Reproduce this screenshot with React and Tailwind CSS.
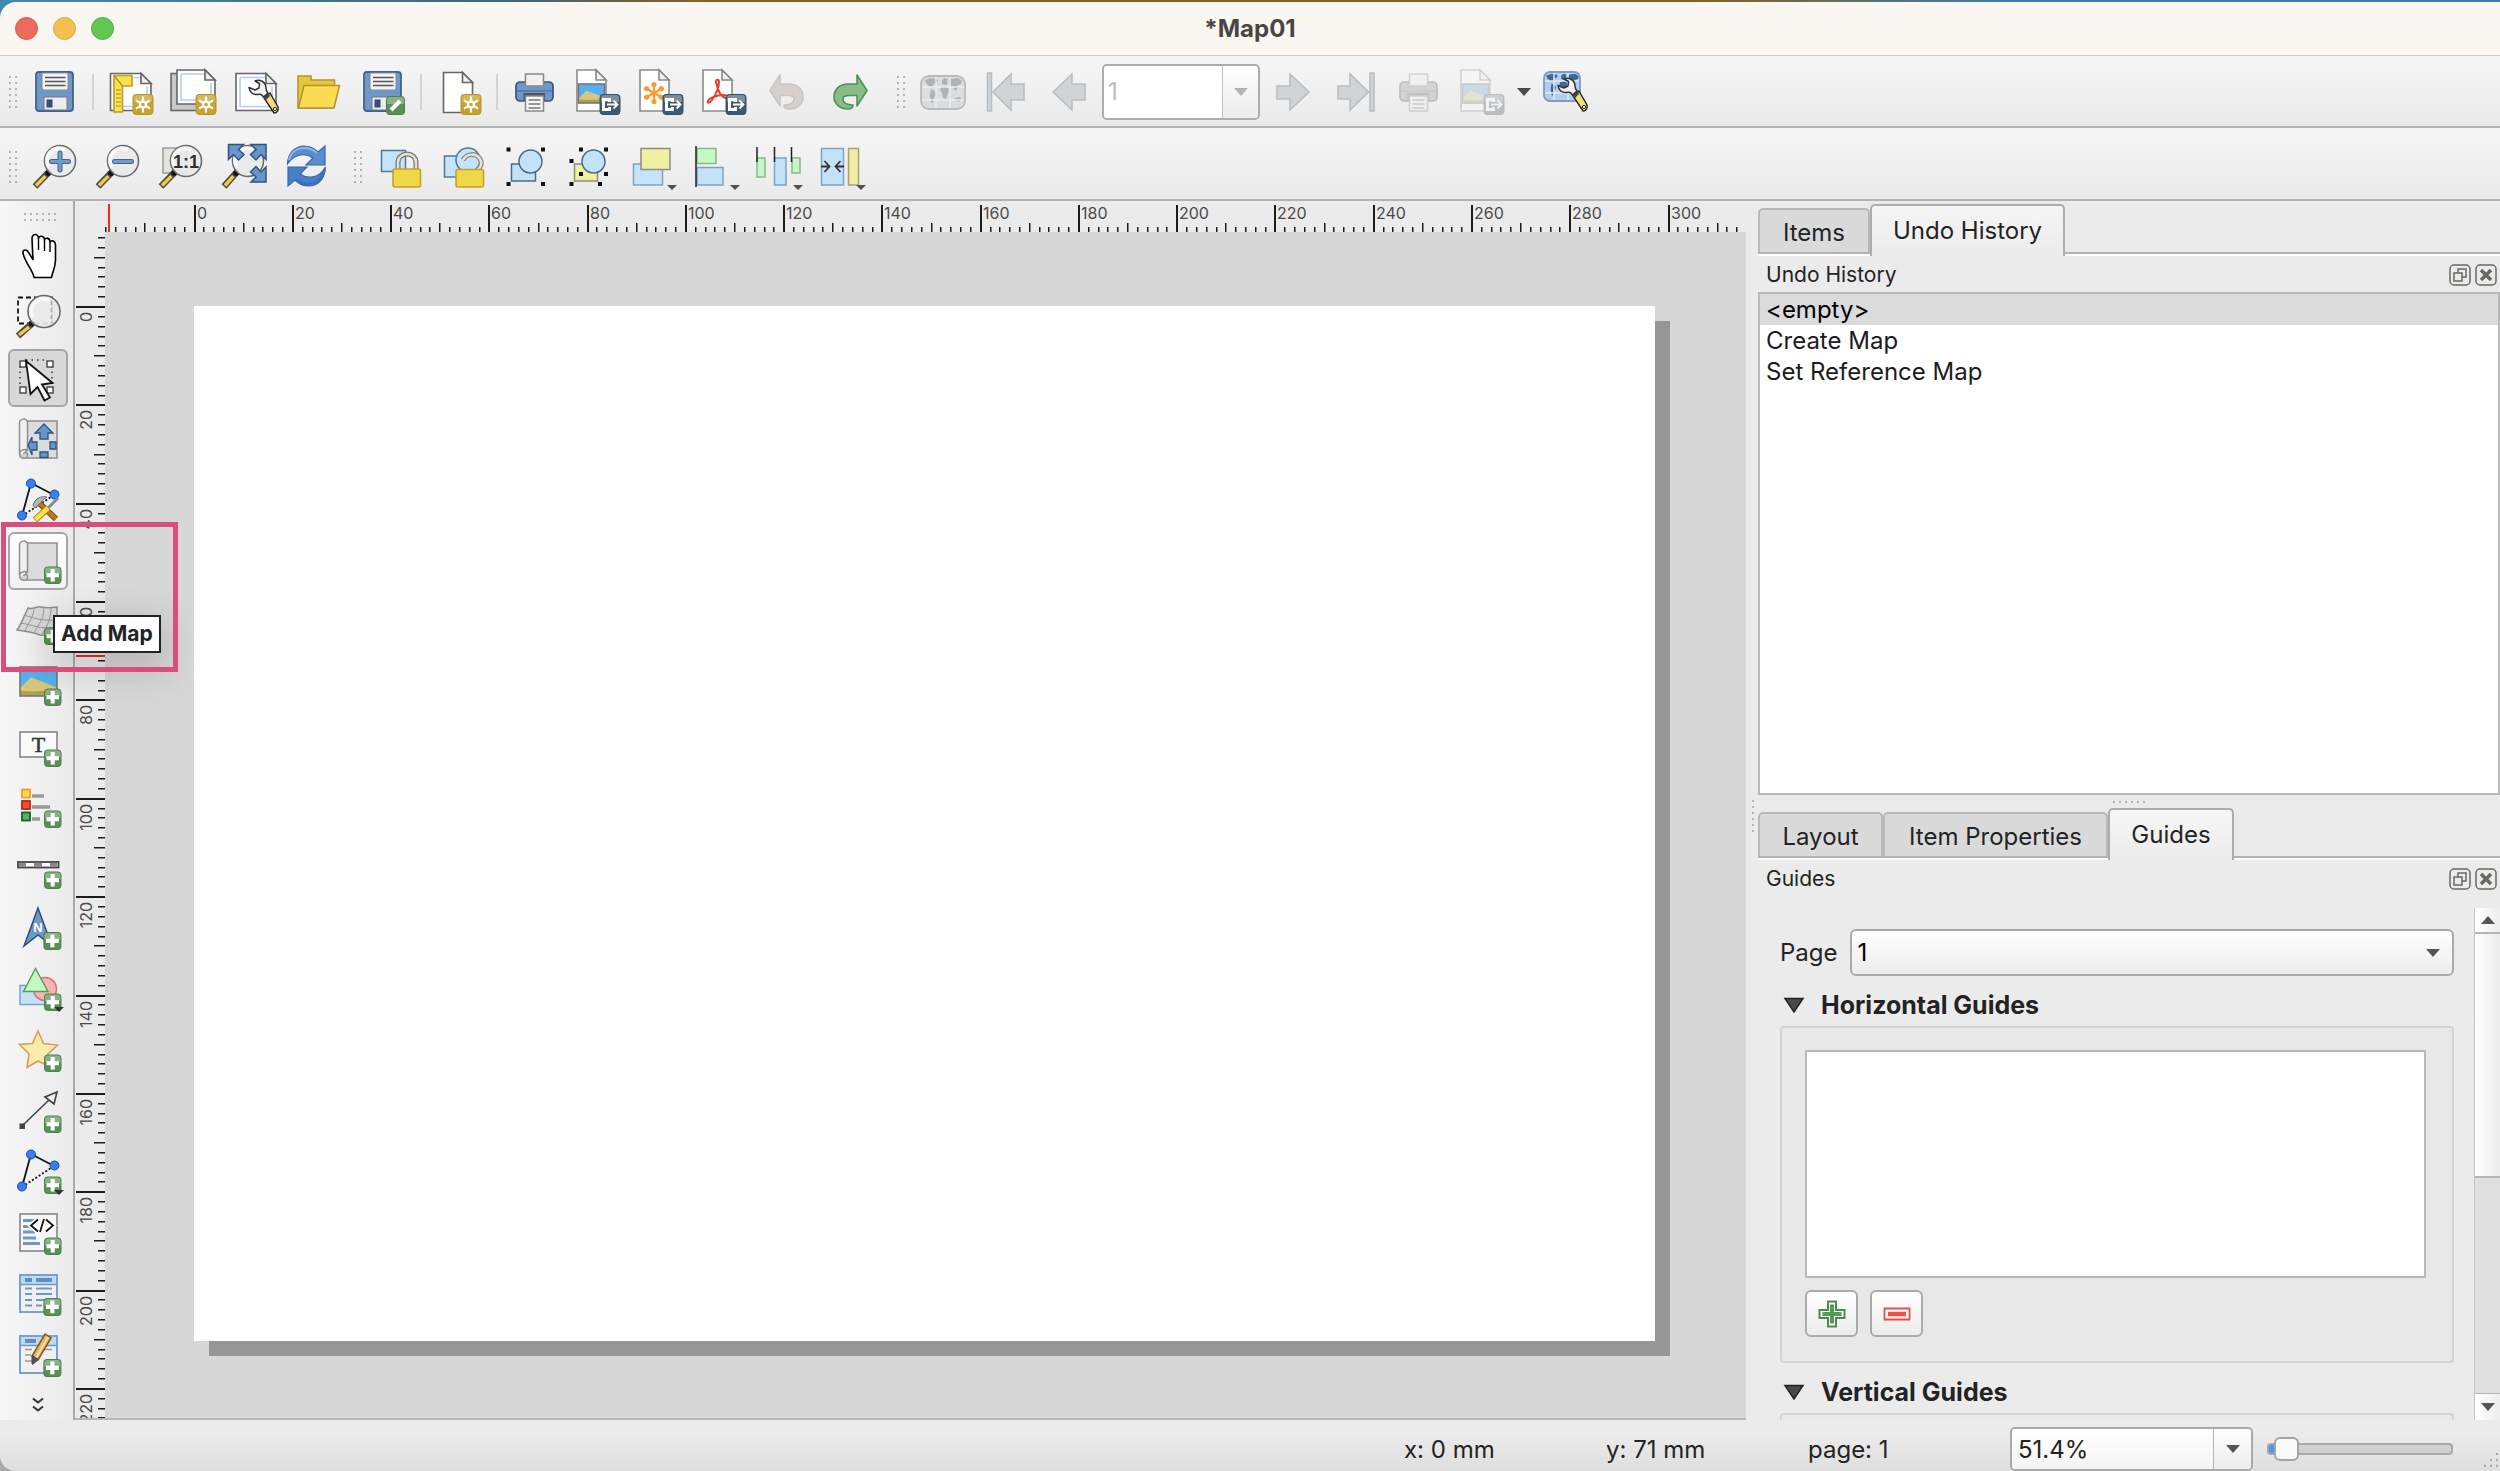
import React from "react";

/* ---------- shared icon parts ---------- */

function Icon({ children, className = "" }) {
  return (
    <svg viewBox="0 0 48 48" className={"block h-12 w-12 shrink-0 overflow-visible " + className} fill="none" aria-hidden="true">
      {children}
    </svg>
  );
}

function GoldBadge() {
  return (
    <g>
      <rect x="26" y="26.5" width="20" height="20" rx="3" fill="#c9a22e" stroke="#b8952b" />
      <path d="M27 33V30a3 3 0 0 1 3-3h12a3 3 0 0 1 3 3v3z" fill="#d4b95c" />
      <path d="M36 28.500v16M29 32.500l14 8M43 32.500l-14 8" stroke="#fff" strokeWidth="2.200" />
      <circle cx="36" cy="36.500" r="4" fill="#fff" />
      <circle cx="36" cy="36.500" r="1.800" fill="#c9a22e" />
    </g>
  );
}

function ExportBadge() {
  return (
    <g>
      <rect x="26" y="26.500" width="20" height="20" rx="3" fill="#3e5a70" stroke="#34506a" />
      <path d="M27 34v-4a3 3 0 0 1 3-3h12a3 3 0 0 1 3 3v4z" fill="#7d8f9d" />
      <path d="M35.500 34v-2.500h-6v10h6V39" stroke="#fff" strokeWidth="3" />
      <path d="M33 36.500h10M39.500 32.500l4 4-4 4" stroke="#fff" strokeWidth="1.800" />
    </g>
  );
}

function PlusBadge({ big = false }) {
  return (
    <g transform={big ? "translate(-1.500 -1.500) scale(1.030)" : undefined}>
      <rect x="30.500" y="30" width="16.500" height="16.500" rx="3" fill="#5a9058" stroke="#4b8249" />
      <path d="M31 37v-3.500a3 3 0 0 1 3-3h9.500a3 3 0 0 1 3 3V37z" fill="#8bb089" />
      <path d="M38.700 32v12.500M32.500 38.200H45" stroke="#fff" strokeWidth="4" />
    </g>
  );
}

function Drop({ x = 39, y = 42, color = "#505050" }) {
  return <path d={`M${x} ${y}h10l-5 5z`} fill={color} />;
}

function Sheet({ x, y, w, h, fold = 10, fill = "#fff", stroke = "#666", inner = false }) {
  return (
    <g>
      <path d={`M${x} ${y}h${w - fold}l${fold} ${fold}v${h - fold}h${-w}z`} fill={fill} stroke={stroke} strokeWidth="1.600" />
      {inner && <path d={`M${x + 4} ${y + 4}h${w - fold - 4}v${fold - 4}M${x + w - 4} ${y + fold + 3}V${y + h - 4}H${x + 4}V${y + 4}`} stroke="#b7cdf7" strokeWidth="1.600" />}
      <path d={`M${x + w - fold} ${y}v${fold}h${fold}z`} fill="#f0f0f0" stroke={stroke} strokeWidth="1.600" />
    </g>
  );
}

function Wrench({ dx = 0, dy = 0 }) {
  return (
    <g transform={`translate(${dx} ${dy})`}>
      <path d="M30 30l6-5 8 14c1 3-1 6-4 6z" fill="#f0dc7c" stroke="#222" strokeWidth="1.400" />
      <path d="M28.500 28.500l5.500-4 2 3.500-4 4z" fill="#444" />
      <circle cx="41" cy="41" r="1.600" fill="#fff" stroke="#222" />
      <path d="M21 13c5-2 11 1 11 7 0 2 0 3 2 5l-4.500 4c-2-3-3-3-6-2.500-5 .5-8-3-8.500-7l6 2.500 4-2 .5-4.500z" fill="#f2f2f2" stroke="#333" strokeWidth="1.500" strokeLinejoin="round" />
    </g>
  );
}

function Floppy() {
  return (
    <g>
      <rect x="5" y="4" width="37" height="39" rx="3" fill="#6f97c9" stroke="#41648f" strokeWidth="1.800" />
      <path d="M11 5h26v15a2 2 0 0 1-2 2H13a2 2 0 0 1-2-2z" fill="#f3f3f3" stroke="#8b8b8b" />
      <path d="M14 9.500h20.500M14 13.500h20.500M14 17.500h20.500" stroke="#555" strokeWidth="1.500" />
      <rect x="13" y="29" width="23" height="13" fill="#ececec" stroke="#777" />
      <rect x="16" y="32" width="5" height="7" fill="#34547c" stroke="#24466d" />
    </g>
  );
}

function Landscape({ x, y, w, h }) {
  return (
    <g>
      <rect x={x} y={y} width={w} height={h} fill="#55b0f0" stroke="#767676" strokeWidth="1.600" />
      <path d={`M${x + 1} ${y + h * 0.7}l${w * 0.27} ${-h * 0.35} ${w * 0.4} ${h * 0.2} ${w * 0.33 - 2} ${h * 0.15}V${y + h - 1}h${2 - w}z`} fill="#d6c77a" />
      <path d={`M${x + 1} ${y + h * 0.82}q${w / 2} ${h * 0.06} ${w - 2} ${-h * 0.04}V${y + h - 1}h${2 - w}z`} fill="#b29f44" />
    </g>
  );
}

function Lens({ cx, cy, r = 15.5, hx = 4, hy = 43.5 }) {
  const jx = cx - r * 0.75;
  const jy = cy + r * 0.75;
  return (
    <g>
      <path d={`M${jx} ${jy}L${hx} ${hy}`} stroke="#4a4a4a" strokeWidth="6.500" />
      <path d={`M${jx - 3} ${jy + 3.5}L${hx + 1} ${hy - 1}`} stroke="#f6c944" strokeWidth="3.500" />
      <circle cx={jx} cy={jy} r="3" fill="#111" />
      <circle cx={cx} cy={cy} r={r} fill="#e9e9e9" fillOpacity=".92" stroke="#6b6b6b" strokeWidth="1.600" />
      <path d={`M${cx - 11} ${cy + 6}A12 12 0 0 1 ${cx + 5} ${cy - 11}`} stroke="#f8f8f8" strokeWidth="4" />
    </g>
  );
}

/* ---------- file toolbar icons ---------- */

const SaveIcon = () => <Icon><Floppy /></Icon>;

const NewLayoutIcon = () => (
  <Icon>
    <Sheet x={3.5} y={5.500} w={40.500} h={37} inner />
    <path d="M7 7.500h18v10.500H15.500v26H7z" fill="#fbe04f" stroke="#c39a2c" strokeWidth="1.600" />
    <path d="M7 7.500l8.500 10.500M9 22h5M9 26h5M9 30h5M9 34h5M9 38h5" stroke="#b28a24" strokeWidth="1.200" />
    <GoldBadge />
  </Icon>
);

const DuplicateLayoutIcon = () => (
  <Icon>
    <rect x="1" y="5.500" width="30" height="37" fill="#c9c9c9" stroke="#666" strokeWidth="1.600" />
    <Sheet x={7} y={2} w={38} h={34} inner />
    <GoldBadge />
  </Icon>
);

const ManagerIcon = () => (
  <Icon>
    <Sheet x={3} y={5.500} w={40} h={37} inner />
    <Wrench dx={1} dy={0} />
  </Icon>
);

const FolderIcon = () => (
  <Icon>
    <path d="M2 40V8h13v4h23.500v6H38l-2 22z" fill="#e7c63f" stroke="#b5952f" strokeWidth="1.600" />
    <path d="M8 17.500h35.500L38 40H2.500z" fill="#fddb52" stroke="#b5952f" strokeWidth="1.600" strokeLinejoin="round" />
  </Icon>
);

const SaveAsIcon = () => (
  <Icon>
    <Floppy />
    <rect x="27.500" y="28.500" width="18" height="18" rx="3" fill="#5a9058" stroke="#4b8249" />
    <path d="M28 36v-4a3 3 0 0 1 3-3h11a3 3 0 0 1 3 3v4z" fill="#8bb089" />
    <path d="M32 42l9-9" stroke="#fff" strokeWidth="4" />
  </Icon>
);

const NewPageIcon = () => (
  <Icon>
    <Sheet x={8.500} y={4.500} w={29} h={40} />
    <GoldBadge />
  </Icon>
);

const PrinterArt = () => (
  <g>
    <rect x="5" y="14" width="37" height="19" rx="4" fill="#6e98c9" stroke="#33557f" strokeWidth="1.700" />
    <path d="M6 23h35" stroke="#5880b2" strokeWidth="2" />
    <rect x="14.500" y="6" width="18" height="12" fill="#f0f0f0" stroke="#888" strokeWidth="1.500" />
    <rect x="12.500" y="25" width="21.500" height="8" fill="#555" />
    <rect x="14.500" y="28" width="18" height="15" fill="#f6f6f6" stroke="#888" strokeWidth="1.500" />
    <path d="M17.500 32h12M17.500 36h12M17.500 40h12" stroke="#777" strokeWidth="1.500" />
  </g>
);
const PrinterIcon = () => <Icon><PrinterArt /></Icon>;
const PrinterOffIcon = () => <Icon className="opacity-30 grayscale"><PrinterArt /></Icon>;

const ExportImageArt = () => (
  <g>
    <Sheet x={3} y={2} w={29} h={41} stroke="#8a8a8a" />
    <Landscape x={4.5} y={16} w={26} h={19} />
    <ExportBadge />
  </g>
);
const ExportImageIcon = () => <Icon><ExportImageArt /></Icon>;
const ExportImageOffIcon = () => <Icon className="opacity-30 saturate-50"><ExportImageArt /></Icon>;

const ExportSvgIcon = () => (
  <Icon>
    <Sheet x={3} y={2} w={29} h={41} stroke="#8a8a8a" />
    {[0, 60, 120, 180, 240, 300].map((a) => (
      <g key={a} transform={`rotate(${a} 17 25)`}>
        <path d="M17 25V17" stroke="#f99b34" strokeWidth="2.200" />
        <circle cx="17" cy="16.500" r="2.600" fill="#f99b34" />
      </g>
    ))}
    <ExportBadge />
  </Icon>
);

const ExportPdfIcon = () => (
  <Icon>
    <Sheet x={3} y={2} w={29} h={41} stroke="#8a8a8a" />
    <path d="M16 14c0-3 3-3 3 0 0 5-3 12-7 18-3 4-5 3-4 1 1-3 9-6 15-6 5 0 6 3 3 3-4 0-8-6-10-16z" stroke="#e8402c" strokeWidth="2" />
    <ExportBadge />
  </Icon>
);

const HookArrow = ({ fill, stroke }) => (
  <path d="M7 22.500L17 7v9h9c9 0 14 6 14 13 0 7-6 12-14 12-4 0-5-1-5-4 7 0 10-3 10-6s-3-3.500-6-3.500H17V38z" fill={fill} stroke={stroke} strokeWidth="1.600" strokeLinejoin="round" />
);
const UndoIcon = () => <Icon><HookArrow fill="#d6d0cd" stroke="#cbc5c2" /></Icon>;
const RedoIcon = () => <Icon className="-scale-x-100"><HookArrow fill="#8abb88" stroke="#4a9355" /></Icon>;

/* ---------- atlas toolbar icons ---------- */

const Continents = ({ color }) => (
  <path
    d="M6 12l6-2 6 1 1 2-4 3-2 3-3-1-3-3zM12 21l4 2 1 3-2 4-1 5-2-1-1-7zM23 12l3-2 3 1-1 3 1 2-3 1-3-1zM22 19l5-1 3 3-1 4-2 6-3-1-1-5-2-3zM31 11l8-1 4 3-1 3-3 1-1 4-2 2-2-4-4-3zM36 30l5-1 1 2-2 3-4-2z"
    fill={color}
  />
);

const AtlasIcon = () => (
  <Icon>
    <rect x="2" y="8" width="44" height="33" rx="8" fill="#dadcde" stroke="#b9bcbe" strokeWidth="1.800" />
    <Continents color="#b0b3b5" />
    <path d="M17 9v31M31 9v31M3 19h42M3 32h42" stroke="#ececec" strokeWidth="1.400" />
  </Icon>
);
const AtlasSettingsIcon = () => (
  <Icon>
    <rect x="3" y="4" width="36" height="29" rx="6" fill="#b3cdec" stroke="#7b9cc4" strokeWidth="1.800" />
    <g transform="translate(0 -3) scale(.88)"><Continents color="#3f6797" /></g>
    <path d="M13 5v27M27 5v27M4 13h34M4 25h34" stroke="#e0ecf9" strokeWidth="1.500" />
    <Wrench dx={2} dy={-2} />
  </Icon>
);
const FirstIcon = () => (
  <Icon><g fill="#d0d4d7" stroke="#b9bec2" strokeWidth="1.600"><path d="M5.500 5h4v38h-4zM11 24L29 6v10h13v16H29v10z" /></g></Icon>
);
const PrevIcon = () => (
  <Icon><path d="M8 24L27 6v10h13v16H27v10z" fill="#d0d4d7" stroke="#b9bec2" strokeWidth="1.600" /></Icon>
);
const NextIcon = () => (
  <Icon><path d="M40 24L21 6v12H8v13h13v11z" fill="#d0d4d7" stroke="#b9bec2" strokeWidth="1.600" /></Icon>
);
const LastIcon = () => (
  <Icon><g fill="#d0d4d7" stroke="#b9bec2" strokeWidth="1.600"><path d="M38 5h4v38h-4zM36.500 24L18 6v12H6v13h12v11z" /></g></Icon>
);

/* ---------- view and arrange toolbar icons ---------- */

const ZoomInIcon = () => (
  <Icon><Lens cx={29} cy={18} /><path d="M29 10v17M20.500 18.500h17" stroke="#41648f" strokeWidth="5" strokeLinecap="round" /><path d="M29 10v17M20.500 18.500h17" stroke="#6f9bcf" strokeWidth="3" strokeLinecap="round" /></Icon>
);
const ZoomOutIcon = () => (
  <Icon><Lens cx={29} cy={18} /><path d="M20.500 18.500h17" stroke="#41648f" strokeWidth="5" strokeLinecap="round" /><path d="M20.500 18.500h17" stroke="#6f9bcf" strokeWidth="3" strokeLinecap="round" /></Icon>
);
const ZoomActualIcon = () => (
  <Icon>
    <rect x="6" y="5" width="24" height="25" fill="#e2e4de" stroke="#9a9a9a" strokeWidth="1.500" />
    <Lens cx={29} cy={18} />
    <text x="29" y="25" textAnchor="middle" fontSize="18" fontWeight="700" fontFamily="Liberation Sans, sans-serif" fill="#2b3032">1:1</text>
  </Icon>
);
const CornerArrow = ({ t }) => (
  <path transform={t} d="M0 0h15l-5 5 5.500 5L10 15.500l-5-5.500-5 5z" fill="#6795ca" stroke="#2f5480" strokeWidth="1.500" />
);
const ZoomFullIcon = () => (
  <Icon>
    <Lens cx={28} cy={18} />
    <CornerArrow t="translate(8.500 1.500)" />
    <CornerArrow t="translate(46 1.500) scale(-1 1)" />
    <CornerArrow t="translate(46 39) scale(-1 -1)" />
  </Icon>
);
const RefreshIcon = () => (
  <Icon>
    <path d="M4.500 21C5 9 13 3 21 3c7 0 11 3 14 6l7-6v19H23l7-7c-7-5-18-5-25.500 6z" fill="#5a8dd0" stroke="#3567ad" strokeWidth="1.200" />
    <path d="M6 17C8 8 15 5 21 5c6 0 10 2 13 5" stroke="#8fb5e4" strokeWidth="2" />
    <path d="M42.500 24C42 37 34 43 26 43c-7 0-11-3-14-6l-7 6V24h19l-7 7c7 5 19 5 25.500-7z" fill="#4a7fc8" stroke="#3567ad" strokeWidth="1.200" />
    <path d="M40 30c-3 8-9 11-14 11-6 0-10-2-13-5" stroke="#3a6fb8" strokeWidth="2" />
  </Icon>
);
const LockIcon = () => (
  <Icon>
    <rect x="5.500" y="7.500" width="24" height="21" fill="#c3e4fa" stroke="#53788f" strokeWidth="1.500" />
    <path d="M22 27v-8a9 8 0 0 1 18 0v8" stroke="#777870" strokeWidth="5" />
    <path d="M22 27v-8a9 8 0 0 1 18 0v8" stroke="#e4e4dc" strokeWidth="2.500" />
    <rect x="17" y="26" width="27.500" height="18" rx="2" fill="#efd847" stroke="#c6a125" strokeWidth="1.600" />
  </Icon>
);
const UnlockIcon = () => (
  <Icon>
    <rect x="5.500" y="13" width="22" height="21" fill="#c3e4fa" stroke="#53788f" strokeWidth="1.500" />
    <circle cx="29" cy="17" r="12" fill="#c3e4fa" stroke="#53788f" strokeWidth="1.500" />
    <path d="M24 17c4-7 13-7 17-1 3 5 0 9-3 11" stroke="#8b8b86" strokeWidth="5" />
    <path d="M24 17c4-7 13-7 17-1 3 5 0 9-3 11" stroke="#e4e4dc" strokeWidth="2.500" />
    <rect x="17" y="26.500" width="27.500" height="17.500" rx="2" fill="#efd847" stroke="#c6a125" strokeWidth="1.600" />
  </Icon>
);
const Dots = ({ pts }) => pts.map(([x, y]) => <rect key={x + "-" + y} x={x - 2} y={y - 2} width="4" height="4" fill="#111" />);
const GroupIcon = () => (
  <Icon>
    <rect x="9.500" y="21" width="24" height="17" fill="#c3e2f8" stroke="#466d88" strokeWidth="1.500" />
    <circle cx="28.500" cy="18.500" r="11.500" fill="#c3e2f8" stroke="#466d88" strokeWidth="1.500" />
    <Dots pts={[[6.500, 6.500], [41, 6.500], [6.500, 41], [41, 41]]} />
  </Icon>
);
const UngroupIcon = () => (
  <Icon>
    <rect x="9.500" y="21" width="23" height="17" fill="#f1efa2" stroke="#8d8d7a" strokeWidth="1.500" />
    <circle cx="28.500" cy="18.500" r="11.500" fill="#c3e2f8" stroke="#466d88" strokeWidth="1.500" />
    <Dots pts={[[16, 6.500], [41, 6.500], [6.500, 18], [16, 31], [41, 31], [6.500, 41], [35, 41]]} />
  </Icon>
);
const RaiseIcon = () => (
  <Icon>
    <rect x="5.500" y="21" width="29" height="21" fill="#c5e4f9" stroke="#7ca4c0" strokeWidth="1.500" />
    <rect x="13" y="5.500" width="29" height="21" fill="#f1efa2" stroke="#8d8d85" strokeWidth="1.500" />
    <Drop />
  </Icon>
);
const AlignIcon = () => (
  <Icon>
    <rect x="6" y="5.500" width="19" height="15" fill="#c4f8c4" stroke="#8ab68a" strokeWidth="1.500" />
    <rect x="6" y="24.500" width="26" height="17.500" fill="#c3e2f8" stroke="#7ca4c0" strokeWidth="1.500" />
    <path d="M5 3v41" stroke="#222" strokeWidth="1.500" />
    <Drop />
  </Icon>
);
const DistributeIcon = () => (
  <Icon>
    <rect x="3" y="15" width="8" height="19" fill="#c4f8c4" stroke="#8ab68a" strokeWidth="1.500" />
    <rect x="20.500" y="15" width="11.500" height="27" fill="#c3e2f8" stroke="#7ca4c0" strokeWidth="1.500" />
    <rect x="38" y="15" width="8" height="15" fill="#c4f8c4" stroke="#8ab68a" strokeWidth="1.500" />
    <path d="M3 4v15M20.500 4v15M37.500 4v15" stroke="#222" strokeWidth="1.500" />
    <Drop />
  </Icon>
);
const ResizeIcon = () => (
  <Icon>
    <rect x="4.500" y="5.500" width="22" height="36.500" fill="#c3e2f8" stroke="#7ca4c0" strokeWidth="1.500" />
    <rect x="31.500" y="5.500" width="10" height="36.500" fill="#f1efa2" stroke="#a3a37a" strokeWidth="1.500" />
    <path d="M4 23.500h8M7.500 18l5 5.500-5 5.500M27 23.500h-8M23.500 18l-5 5.500 5 5.500" stroke="#333" strokeWidth="1.800" />
    <Drop />
  </Icon>
);

/* ---------- toolbox icons ---------- */

const HandIcon = () => (
  <Icon>
    <path
      d="M20 45.500C19 38 11 31 9 21c-.500-4 4-4 5.500-.500l4.500 7L18 7c0-6 6-6 6.500-.500.500-3.500 6-3 6 1.500 1-3 5.500-2 5.500 2 1.500-2.500 5.500-1 5.500 3V28c0 7-2.500 10-4 17.500z"
      fill="#fff" stroke="#000" strokeWidth="1.600" strokeLinejoin="round"
    />
    <path d="M24.500 6.500V18M30.500 8v11M36 10v10" stroke="#000" strokeWidth="1.400" />
  </Icon>
);
const ZoomToolIcon = () => (
  <Icon>
    <rect x="4" y="4.500" width="34" height="26" stroke="#111" strokeWidth="1.800" strokeDasharray="5 3" />
    <Lens cx={30} cy={18.500} r={16} hx={4} hy={43} />
    <path d="M37.500 8v22" stroke="#aaa" strokeWidth="1.600" strokeDasharray="4 3" />
  </Icon>
);
const SelectIcon = () => (
  <Icon>
    <path d="M12 6h20M6 12v22M38 12v22" stroke="#333" strokeWidth="1.500" strokeDasharray="1.500 4" />
    <g fill="#fff" stroke="#444" strokeWidth="1.400">
      <rect x="6" y="7" width="6" height="6" /><rect x="33" y="7" width="6" height="6" />
      <rect x="6" y="33" width="6" height="6" /><rect x="33" y="33" width="6" height="6" />
    </g>
    <path d="M12 7l4.500 33 7-7 7 13.500 5.500-3-8-13 10.500-1.500z" fill="#fff" stroke="#111" strokeWidth="1.800" />
  </Icon>
);
const ScrollArt = () => (
  <g>
    <path d="M12 6h31v37H12z" fill="#dcdcdc" stroke="#8f8f8f" strokeWidth="1.600" />
    <path d="M5.500 8c0-5 8-5 8-1v28c-3-1-8 0-8 4z" fill="#f0f0f0" stroke="#8f8f8f" strokeWidth="1.500" />
    <path d="M5.500 38.500c0 6 8 6 8 2v-2c-1-1.500-4-1.500-4 .500" fill="#d2d2d2" stroke="#8f8f8f" strokeWidth="1.400" />
  </g>
);
const MoveContentIcon = () => (
  <Icon>
    <ScrollArt />
    <g fill="#6795ca" stroke="#2f5480" strokeWidth="1.300">
      <path d="M30 9l9 9h-5v6h-8v-6h-5z" /><path d="M14 30l4-8v5h5v8h-5v5z" />
      <path d="M42 27v7h-6v-7z" /><path d="M26 37h8v5.500h-8z" />
    </g>
  </Icon>
);
const NodeArt = () => (
  <g>
    <path d="M8 40l9-33 23 12" stroke="#111" strokeWidth="1.800" />
    <path d="M8 40l32-21" stroke="#111" strokeWidth="1.800" strokeDasharray="2 2" />
    <g fill="#3480fa" stroke="#1b4d9c"><circle cx="17" cy="7.500" r="4.500" /><circle cx="40.500" cy="18.500" r="4.500" /><circle cx="8" cy="39.500" r="4.500" /></g>
  </g>
);
const EditNodesIcon = () => (
  <Icon>
    <NodeArt />
    <path d="M22 24l20 19" stroke="#7a4a12" strokeWidth="6" /><path d="M22 24l20 19" stroke="#b9781f" strokeWidth="4" />
    <path d="M19 29c3-8 9-9 14-8-4 2-7 7-12 11z" fill="#b5b8b2" stroke="#777" />
    <path d="M44 22L32 34" stroke="#888" strokeWidth="3" />
    <path d="M34 32L21 44" stroke="#a98a12" strokeWidth="6.500" /><path d="M34 32L21.500 43.500" stroke="#fce04a" strokeWidth="4.500" />
  </Icon>
);
const AddMapIcon = () => <Icon><ScrollArt /><PlusBadge /></Icon>;
const Add3dIcon = () => (
  <Icon>
    <path d="M14 10c5 2 8-2 13-1s10 1 16 0v24c-8-1-10 6-17 4-8-3-14-4-23-5 4-5 7-14 11-22z" fill="#d9d9d9" stroke="#8f8f8f" strokeWidth="1.500" />
    <path d="M10 17c10 3 16 6 33 5M7 25c12 2 20 7 36 4M20 10c0 9-6 15-9 23M29 9c3 9-5 18-9 26M37 10c0 8-3 18-9 26" stroke="#9b9b9b" />
    <PlusBadge />
  </Icon>
);
const AddPictureIcon = () => <Icon><Landscape x={6} y={8} w={37} h={29} /><PlusBadge /></Icon>;
const AddLabelIcon = () => (
  <Icon>
    <rect x="6" y="12" width="37" height="25" fill="#fafafa" stroke="#929292" strokeWidth="1.800" />
    <text x="24.500" y="32" textAnchor="middle" fontSize="22" fontFamily="Liberation Serif, serif" fill="#333" stroke="#333" strokeWidth=".5">T</text>
    <PlusBadge />
  </Icon>
);
const AddLegendIcon = () => (
  <Icon>
    <rect x="8" y="8.500" width="8" height="8" fill="#fddf4c" stroke="#f09b39" strokeWidth="1.800" />
    <rect x="8" y="20" width="8" height="8" fill="#fb4a30" stroke="#b62a1c" strokeWidth="1.800" />
    <rect x="8" y="31.500" width="8" height="8" fill="#4fb95a" stroke="#1e5a34" strokeWidth="1.800" />
    <path d="M18 15h12M18 26h18M18 38h8" stroke="#999" strokeWidth="3.500" />
    <PlusBadge />
  </Icon>
);
const AddScaleBarIcon = () => (
  <Icon>
    <rect x="4" y="20" width="40.500" height="5.500" fill="#fff" stroke="#444" strokeWidth="1.800" />
    <path d="M5 22.800h7M20 22.800h8M36 22.800h7" stroke="#888" strokeWidth="4" />
    <PlusBadge />
  </Icon>
);
const AddNorthIcon = () => (
  <Icon>
    <path d="M24 5l14 38-14-11-14 11z" fill="#6e98c9" stroke="#2f5076" strokeWidth="1.500" />
    <text x="24" y="29" textAnchor="middle" fontSize="13" fontWeight="700" fontFamily="Liberation Sans, sans-serif" fill="#fff">N</text>
    <PlusBadge big />
  </Icon>
);
const AddShapeIcon = () => (
  <Icon>
    <rect x="6" y="21.500" width="26" height="19" fill="#c3e2f8" stroke="#7ca4c0" strokeWidth="1.500" />
    <circle cx="31" cy="25" r="11.500" fill="#f9b3b3" stroke="#db6f6f" strokeWidth="1.500" />
    <path d="M21.500 4.500L34 27.500H9.500z" fill="#c4f8c4" stroke="#5b9a5b" strokeWidth="1.500" />
    <PlusBadge />
    <Drop x={40} y={43} color="#333" />
  </Icon>
);
const AddStarIcon = () => (
  <Icon>
    <path d="M24 6l5.500 12.500 14 1.500-10 9.500 3 12.500L24 36l-11 6.500 2-13.500-9.500-9.500 13-1z" fill="#fcecac" stroke="#dc9b5f" strokeWidth="1.600" />
    <PlusBadge />
  </Icon>
);
const AddArrowIcon = () => (
  <Icon>
    <path d="M8 40l27-26" stroke="#444" strokeWidth="1.600" />
    <rect x="5.500" y="37.500" width="5.500" height="5.500" fill="#444" />
    <path d="M43 6l-12 5 9 7z" fill="#eee" stroke="#444" strokeWidth="1.700" />
    <PlusBadge />
  </Icon>
);
const AddNodeIcon = () => <Icon><NodeArt /><PlusBadge /><Drop x={40} y={43} color="#333" /></Icon>;
const AddHtmlIcon = () => (
  <Icon>
    <rect x="6" y="6" width="37" height="37" fill="#f7f7f7" stroke="#929292" strokeWidth="1.800" />
    <path d="M9 12.500h12M9 18.500h9M9 24h12M9 30h13M9 35.500h17" stroke="#6e98c9" strokeWidth="3" />
    <path d="M24 11.500l-7 6 7 6M32 11.500l7 6-7 6M30 11l-4 13" stroke="#fff" strokeWidth="5" />
    <path d="M24 11.500l-7 6 7 6M32 11.500l7 6-7 6M30 11l-4 13" stroke="#111" strokeWidth="1.800" />
    <PlusBadge />
  </Icon>
);
const AddTableIcon = () => (
  <Icon>
    <rect x="6" y="6" width="37" height="37" fill="#f0f0f0" stroke="#6e98c9" strokeWidth="1.800" />
    <path d="M7 7h35v8H7z" fill="#b9dcf4" /><path d="M6 15.500h37" stroke="#6e98c9" strokeWidth="1.600" />
    <path d="M11 11h7M22 11h16" stroke="#5f8cc2" strokeWidth="4" />
    <path d="M11 19.500h7M22 19.500h16M11 25h7M22 25h16M11 31h7M22 31h14M11 36.500h7M22 36.500h6" stroke="#6e98c9" strokeWidth="1.800" />
    <PlusBadge big />
  </Icon>
);
const AddFixedTableIcon = () => (
  <Icon>
    <rect x="6" y="6" width="37" height="37" fill="#f0f0f0" stroke="#6e98c9" strokeWidth="1.800" />
    <path d="M7 7h35v8H7z" fill="#b9dcf4" /><path d="M6 15.500h37" stroke="#6e98c9" strokeWidth="1.600" />
    <path d="M11 11h11" stroke="#5f8cc2" strokeWidth="4" />
    <path d="M11 19.500h7M28 19.500h10M11 25h6M11 31h8" stroke="#999" strokeWidth="1.600" />
    <path d="M31 4l6 4-13 22-6-4z" fill="#eab561" stroke="#8a5318" strokeWidth="1.500" />
    <path d="M34 7L22 28" stroke="#f8ddae" strokeWidth="2" />
    <path d="M18 25.500l6.500 4-6 5-0.500-1z" fill="#555" stroke="#444" />
    <PlusBadge big />
  </Icon>
);

/* ---------- building blocks ---------- */

function ToolButton({ label, icon: I, disabled }) {
  return (
    <button type="button" aria-label={label} disabled={disabled} className="flex h-[60px] w-[60px] shrink-0 items-center justify-center">
      <I />
    </button>
  );
}

function GripV() {
  return (
    <svg viewBox="0 0 8 32" className="block h-8 w-2 shrink-0" aria-hidden="true">
      {[0, 6, 12, 18, 24, 30].map((y) => (
        <g key={y} fill="#b4b4b4"><rect x="0" y={y} width="2" height="2" /><rect x="6" y={y} width="2" height="2" /></g>
      ))}
    </svg>
  );
}

const Separator = () => (
  <div className="flex w-2.5 shrink-0 justify-center"><div className="h-9 w-0.5 bg-[#d4d4d4]" /></div>
);

const Triangle = ({ color = "#555", up = false }) => (
  <svg viewBox="0 0 14 8" className={"block h-2 w-3.5 " + (up ? "-scale-y-100" : "")} aria-hidden="true">
    <path d="M0 0h14L7 8z" fill={color} />
  </svg>
);

function Tabs({ items, active }) {
  return (
    <div role="tablist" className="flex items-end border-b-2 border-[#b2b2b2] text-[24px] leading-7 shadow-[0_2px_0_#fff]">
      {items.map(([name, width]) =>
        name === active ? (
          <button key={name} role="tab" aria-selected="true" type="button" className={"-mb-1 h-[52px] rounded-t-[5px] border-2 border-b-0 border-[#adadad] bg-linear-to-b from-[#f6f6f6] to-[#ebebeb] " + width}>
            {name}
          </button>
        ) : (
          <button key={name} role="tab" aria-selected="false" type="button" className={"h-11 rounded-t-[5px] border-2 border-b-0 border-[#b9b9b9] bg-[#dadada] pt-1 " + width}>
            {name}
          </button>
        )
      )}
    </div>
  );
}

function DockTitle({ title }) {
  return (
    <div className="flex h-[38px] items-center justify-between pl-2 pr-[3px] pt-1">
      <h2 className="text-[21px] leading-6">{title}</h2>
      <div className="flex gap-1">
        <button type="button" aria-label={"Float " + title}>
          <svg viewBox="0 0 22 22" className="block h-[22px] w-[22px]" fill="none" stroke="#6b6864" strokeWidth="1.500">
            <rect x="1" y="1" width="20" height="20" rx="4" /><path d="M9 9V5h8v8h-4" /><rect x="5" y="9" width="8" height="8" />
          </svg>
        </button>
        <button type="button" aria-label={"Close " + title}>
          <svg viewBox="0 0 22 22" className="block h-[22px] w-[22px]" fill="none" stroke="#6b6864" strokeWidth="1.500">
            <rect x="1" y="1" width="20" height="20" rx="4" /><path d="M6 6l10 10M16 6L6 16" strokeWidth="3.500" />
          </svg>
        </button>
      </div>
    </div>
  );
}

function SectionHead({ children }) {
  return (
    <button type="button" aria-expanded="true" className="flex h-[50px] items-center gap-4 pl-[3px] pt-2 text-[25px] font-bold leading-8">
      <svg viewBox="0 0 22 16" className="block h-4 w-[22px]" aria-hidden="true"><path d="M2 1.500h18L11 15z" fill="#4a4a4a" stroke="#222" strokeWidth="1.500" /></svg>
      {children}
    </button>
  );
}

/* ---------- rulers: one tick every 2 mm ---------- */

const MM_X = 4.913;
const MM_Y = 4.918;
const range = (from, to) => Array.from({ length: (to - from) / 2 + 1 }, (_, i) => from + i * 2);

function HorizontalRuler() {
  return (
    <svg className="block h-8 w-full text-[16px]" aria-hidden="true">
      {range(-18, 314).map((mm) => {
        const x = Math.round(88.6 + mm * MM_X);
        const major = mm >= 0 && mm % 20 === 0;
        const len = major ? 28 : mm % 10 === 0 ? 10 : 6;
        return (
          <g key={mm}>
            <rect x={x} y={32 - len} width={major ? 2 : 1.5} height={len} fill="#1c1c1c" />
            {major && <text x={x + 3} y="18" fill="#4a4a4a">{mm}</text>}
          </g>
        );
      })}
      <rect x="3" y="3" width="2" height="29" fill="#f5281e" />
    </svg>
  );
}

function VerticalRuler() {
  return (
    <svg className="block h-full w-[30px] text-[16px]" aria-hidden="true">
      {range(-14, 226).map((mm) => {
        const y = Math.round(74 + mm * MM_Y);
        const major = mm >= 0 && mm % 20 === 0;
        const len = major ? 29 : mm % 10 === 0 ? 11 : 7;
        return (
          <g key={mm}>
            <rect x={30 - len} y={y} width={len} height={major ? 2 : 1.5} fill="#1c1c1c" />
            {major && <text transform={`translate(17 ${y + 6}) rotate(-90)`} textAnchor="end" fill="#4a4a4a">{mm}</text>}
          </g>
        );
      })}
      <rect x="1" y="423" width="29" height="2" fill="#e0301e" />
    </svg>
  );
}

const TOOLBOX = [
  ["Pan", HandIcon], ["Zoom", ZoomToolIcon], ["Select/Move Item", SelectIcon], ["Move Item Content", MoveContentIcon],
  ["Edit Nodes", EditNodesIcon], ["Add Map", AddMapIcon], ["Add 3D Map", Add3dIcon], ["Add Picture", AddPictureIcon],
  ["Add Label", AddLabelIcon], ["Add Legend", AddLegendIcon], ["Add Scale Bar", AddScaleBarIcon], ["Add North Arrow", AddNorthIcon],
  ["Add Shape", AddShapeIcon], ["Add Marker", AddStarIcon], ["Add Arrow", AddArrowIcon], ["Add Node Item", AddNodeIcon],
  ["Add HTML", AddHtmlIcon], ["Add Attribute Table", AddTableIcon], ["Add Fixed Table", AddFixedTableIcon],
];

const HISTORY = ["<empty>", "Create Map", "Set Reference Map"];

export default function App() {
  return (
    <div className="bg-[#a9a9a9] font-[Inter,sans-serif] text-[#232323]">
      <div className="relative flex h-screen flex-col overflow-hidden rounded-bl-2xl bg-[#ebebeb]">
        <header className="shrink-0 bg-[linear-gradient(to_right,#4389ae_0%,#3d6787_20%,#86601f_28%,#86601f_68%,#3c7ea6_80%)] pt-0.5">
          <div className="grid h-[54px] grid-cols-3 items-center rounded-tl-2xl border-b border-[#cfcbc8] bg-[#faf6f1] px-[15px]">
            <div className="flex gap-[15px]">
              <button type="button" aria-label="Close window" className="h-[23px] w-[23px] rounded-full border border-[#d9574c] bg-[#ec6a5e]" />
              <button type="button" aria-label="Minimize window" className="h-[23px] w-[23px] rounded-full border border-[#dea644] bg-[#f5bf4f]" />
              <button type="button" aria-label="Zoom window" className="h-[23px] w-[23px] rounded-full border border-[#56ae47] bg-[#62c654]" />
            </div>
            <h1 className="text-center text-[24px] font-bold leading-8 text-[#484645]">*Map01</h1>
          </div>
        </header>

        <div role="toolbar" aria-label="Layout" className="flex h-[72px] shrink-0 items-center gap-[3px] border-b-2 border-[#b3b3b3] bg-linear-to-b from-[#f6f6f6] to-[#eaeaea] pl-[9px] pt-0.5">
          <div className="w-[13px] shrink-0"><GripV /></div>
          <ToolButton label="Save Project" icon={SaveIcon} />
          <Separator />
          <ToolButton label="New Layout" icon={NewLayoutIcon} />
          <ToolButton label="Duplicate Layout" icon={DuplicateLayoutIcon} />
          <ToolButton label="Layout Manager" icon={ManagerIcon} />
          <ToolButton label="Add Items from Template" icon={FolderIcon} />
          <ToolButton label="Save as Template" icon={SaveAsIcon} />
          <Separator />
          <ToolButton label="Add Pages" icon={NewPageIcon} />
          <Separator />
          <ToolButton label="Print Layout" icon={PrinterIcon} />
          <ToolButton label="Export as Image" icon={ExportImageIcon} />
          <ToolButton label="Export as SVG" icon={ExportSvgIcon} />
          <ToolButton label="Export as PDF" icon={ExportPdfIcon} />
          <ToolButton label="Undo" icon={UndoIcon} disabled />
          <ToolButton label="Redo" icon={RedoIcon} />
          <div className="w-[27px] shrink-0 pl-3.5"><GripV /></div>
          <ToolButton label="Preview Atlas" icon={AtlasIcon} disabled />
          <ToolButton label="First Feature" icon={FirstIcon} disabled />
          <ToolButton label="Previous Feature" icon={PrevIcon} disabled />
          <div className="flex h-14 w-[158px] shrink-0 overflow-hidden rounded-[5px] border-2 border-[#adadad]">
            <input aria-label="Atlas page" disabled defaultValue="1" className="w-[118px] bg-white px-1 text-[24px] text-[#bdbdbd]" />
            <button type="button" aria-label="Atlas pages" disabled className="flex flex-1 items-center justify-center border-l border-[#c2c2c2] bg-linear-to-b from-white to-[#ececec]"><Triangle color="#b3b3b3" /></button>
          </div>
          <ToolButton label="Next Feature" icon={NextIcon} disabled />
          <ToolButton label="Last Feature" icon={LastIcon} disabled />
          <ToolButton label="Print Atlas" icon={PrinterOffIcon} disabled />
          <ToolButton label="Export Atlas" icon={ExportImageOffIcon} disabled />
          <button type="button" aria-label="Export Atlas options" className="flex h-[60px] w-[17px] shrink-0 items-center justify-center"><Triangle color="#4a4a4a" /></button>
          <ToolButton label="Atlas Settings" icon={AtlasSettingsIcon} />
        </div>

        <div role="toolbar" aria-label="View and arrange" className="flex h-[73px] shrink-0 items-center gap-[3px] border-b-2 border-[#b3b3b3] bg-linear-to-b from-[#f6f6f6] to-[#eaeaea] pl-[9px] pt-1.5">
          <div className="w-[13px] shrink-0"><GripV /></div>
          <ToolButton label="Zoom In" icon={ZoomInIcon} />
          <ToolButton label="Zoom Out" icon={ZoomOutIcon} />
          <ToolButton label="Zoom to 100%" icon={ZoomActualIcon} />
          <ToolButton label="Zoom Full" icon={ZoomFullIcon} />
          <ToolButton label="Refresh View" icon={RefreshIcon} />
          <div className="w-[27px] shrink-0 pl-3.5"><GripV /></div>
          <ToolButton label="Lock Selected Items" icon={LockIcon} />
          <ToolButton label="Unlock All Items" icon={UnlockIcon} />
          <ToolButton label="Group" icon={GroupIcon} />
          <ToolButton label="Ungroup" icon={UngroupIcon} />
          <ToolButton label="Raise" icon={RaiseIcon} />
          <ToolButton label="Align" icon={AlignIcon} />
          <ToolButton label="Distribute" icon={DistributeIcon} />
          <ToolButton label="Resize" icon={ResizeIcon} />
        </div>

        <div className="flex min-h-0 flex-1">
          <div role="toolbar" aria-label="Toolbox" className="flex w-[75px] shrink-0 flex-col items-center overflow-hidden border-r-2 border-[#ababab] bg-linear-to-r from-[#f7f7f7] to-[#eaeaea] pt-3">
            <svg viewBox="0 0 32 8" className="mb-1.5 ml-1.5 block h-2 w-8 shrink-0" aria-hidden="true">
              {[0, 6, 12, 18, 24, 30].map((x) => (
                <g key={x} fill="#b4b4b4"><rect x={x} y="0" width="2" height="2" /><rect x={x} y="6" width="2" height="2" /></g>
              ))}
            </svg>
            <div className="flex flex-col gap-[3px] pl-0.5">
              {TOOLBOX.map(([label, I]) => (
                <button
                  key={label}
                  type="button"
                  aria-label={label}
                  aria-pressed={label === "Select/Move Item"}
                  className={
                    "flex h-[58px] w-[60px] shrink-0 items-center justify-center rounded-md border-2 " +
                    (label === "Select/Move Item" ? "border-[#a6a6a6] bg-[#d8d8d8]" : label === "Add Map" ? "border-[#a6a6a6] bg-linear-to-b from-white to-[#f2f2f2]" : "border-transparent")
                  }
                >
                  <I />
                </button>
              ))}
            </div>
            <button type="button" aria-label="More tools" className="mt-3.5 pl-0.5">
              <svg viewBox="0 0 14 16" className="block h-4 w-3.5" fill="none" stroke="#333" strokeWidth="2"><path d="M2 1.500l5 4 5-4M2 9.500l5 4 5-4" /></svg>
            </button>
          </div>

          <main className="grid min-w-0 flex-1 grid-cols-[30px_1fr] grid-rows-[31px_1fr] border-b-2 border-[#b8b8b8]">
            <div />
            <div className="min-w-0 overflow-hidden"><HorizontalRuler /></div>
            <div className="min-h-0 overflow-hidden"><VerticalRuler /></div>
            <div className="relative overflow-hidden bg-[#d7d7d7]">
              <div className="absolute left-[89px] top-[74px] h-[1035px] w-[1461px] bg-white shadow-[15px_15px_0_#969696]" />
            </div>
          </main>

          <aside className="flex w-[754px] shrink-0 flex-col pl-3">
            <section className="pt-[3px]">
              <Tabs items={[["Items", "w-28"], ["Undo History", "w-[195px]"]]} active="Undo History" />
              <DockTitle title="Undo History" />
              <ul className="h-[503px] border-2 border-[#b9b9b9] bg-white text-[24px] leading-[31px] text-[#1c1c1c]">
                {HISTORY.map((h, i) => (
                  <li key={h} className={"px-1.5 " + (i === 0 ? "bg-[#dbdbdb] text-black" : "")}>{h}</li>
                ))}
              </ul>
            </section>

            <div className="flex h-[13px] shrink-0 items-center justify-center" aria-hidden="true">
              <svg viewBox="0 0 32 2" className="block h-0.5 w-8">
                {[0, 6, 12, 18, 24, 30].map((x) => <rect key={x} x={x} y="0" width="2" height="2" fill="#b4b4b4" />)}
              </svg>
            </div>

            <section className="flex min-h-0 flex-1 flex-col">
              <Tabs items={[["Layout", "w-[125px]"], ["Item Properties", "w-[225px]"], ["Guides", "w-[126px]"]]} active="Guides" />
              <DockTitle title="Guides" />
              <div className="flex min-h-0 flex-1 pt-3">
                <div className="min-w-0 flex-1 overflow-hidden pl-[22px] pr-5 pt-[21px]">
                  <div className="flex items-center gap-3 text-[24px]">
                    <label htmlFor="guide-page">Page</label>
                    <div className="relative flex-1">
                      <select id="guide-page" className="block h-[47px] w-full appearance-none rounded-md border-2 border-[#a9a9a9] bg-linear-to-b from-white to-[#ececec] px-1.5 text-black">
                        <option>1</option>
                      </select>
                      <div className="pointer-events-none absolute right-3.5 top-5"><Triangle /></div>
                    </div>
                  </div>
                  <SectionHead>Horizontal Guides</SectionHead>
                  <div className="rounded border-2 border-[#d3d3d3] bg-[#e8e8e8] pb-6 pl-[23px] pr-[26px] pt-[22px]">
                    <div className="h-[228px] border-2 border-[#b9b9b9] bg-white" />
                    <div className="mt-3 flex gap-3">
                      <button type="button" aria-label="Add guide" className="flex h-[47px] w-[53px] items-center justify-center rounded-md border-2 border-[#ababab] bg-linear-to-b from-white to-[#ececec]">
                        <svg viewBox="0 0 28 28" className="block h-7 w-7" fill="none"><path d="M10 1.500h8V10h8.500v8H18v8.500h-8V18H1.500v-8H10z" fill="#fff" stroke="#4d8a4d" strokeWidth="2" /><path d="M14 4.500v19M4.500 14h19" stroke="#5a9a58" strokeWidth="4" /></svg>
                      </button>
                      <button type="button" aria-label="Remove guide" className="flex h-[47px] w-[53px] items-center justify-center rounded-md border-2 border-[#ababab] bg-linear-to-b from-white to-[#ececec]">
                        <svg viewBox="0 0 28 28" className="block h-7 w-7" fill="none"><path d="M1.500 8.500h25v11h-25z" fill="#fff" stroke="#ee4a47" strokeWidth="1.800" /><path d="M5 14h18" stroke="#f0504c" strokeWidth="4.500" /></svg>
                      </button>
                    </div>
                  </div>
                  <SectionHead>Vertical Guides</SectionHead>
                  <div className="h-40 rounded border-2 border-[#d3d3d3] bg-[#e8e8e8]" />
                </div>
                <div className="flex w-[26px] shrink-0 flex-col border-l border-[#c4c4c4] bg-[#dfdfdf]" aria-hidden="true">
                  <div className="flex h-[26px] items-center justify-center border-b-2 border-[#b5b5b5] bg-linear-to-r from-white to-[#ededed]"><Triangle up /></div>
                  <div className="h-[244px] border-b-2 border-[#b5b5b5] bg-linear-to-r from-white to-[#ececec]" />
                  <div className="flex-1" />
                  <div className="flex h-[27px] items-center justify-center border-t border-[#b5b5b5] bg-linear-to-r from-white to-[#ededed]"><Triangle /></div>
                </div>
              </div>
            </section>
          </aside>
        </div>

        <footer className="flex h-[51px] shrink-0 items-end justify-end bg-linear-to-b from-[#ebebeb] from-30% to-[#dedede] pr-[47px] text-[24px]">
          <div className="flex h-[42px] items-center">
            <div className="w-[202px]">x: 0 mm</div>
            <div className="w-[202px]">y: 71 mm</div>
            <div className="w-[202px]">page: 1</div>
          </div>
          <div className="flex h-11 w-[243px] overflow-hidden rounded-[5px] border-2 border-[#a9a9a9]">
            <input aria-label="Zoom level" defaultValue="51.4%" className="w-[201px] bg-linear-to-b from-white to-[#f4f4f4] px-1.5 pt-0.5 text-[24px]" />
            <button type="button" aria-label="Zoom presets" className="flex flex-1 items-center justify-center border-l border-[#b5b5b5] bg-linear-to-b from-white to-[#ececec]"><Triangle /></button>
          </div>
          <div className="flex h-11 items-center pl-3.5">
            <input
              type="range"
              aria-label="Zoom"
              min="0"
              max="100"
              defaultValue="3"
              className="h-3 w-[186px] appearance-none rounded border-2 border-[#a9a9a9] bg-linear-to-r from-[#4f96ea] from-4% to-[#d0d0d0] to-4% [&::-webkit-slider-thumb]:h-6 [&::-webkit-slider-thumb]:w-[25px] [&::-webkit-slider-thumb]:appearance-none [&::-webkit-slider-thumb]:rounded-md [&::-webkit-slider-thumb]:border-2 [&::-webkit-slider-thumb]:border-[#a5a5a5] [&::-webkit-slider-thumb]:bg-[#fafafa]"
            />
          </div>
        </footer>

        <svg viewBox="0 0 2 32" className="absolute left-[1752px] top-[800px] h-8 w-0.5" aria-hidden="true">
          {[0, 6, 12, 18, 24, 30].map((y) => <rect key={y} x="0" y={y} width="2" height="2" fill="#b4b4b4" />)}
        </svg>
        <svg viewBox="0 0 20 18" className="absolute bottom-0 right-0 h-[18px] w-5" aria-hidden="true">
          {[[16, 0], [10, 6], [16, 6], [4, 12], [10, 12], [16, 12]].map(([x, y]) => <rect key={x + "," + y} x={x} y={y} width="2" height="2" fill="#a8a8a8" />)}
        </svg>

        <div role="tooltip" className="absolute left-[53px] top-[615px] border-2 border-[#222] bg-white px-1.5 py-[5px] text-[21px] font-bold leading-6 shadow-[0_12px_36px_8px_rgba(0,0,0,0.14)]">
          Add Map
        </div>
        <div className="pointer-events-none absolute left-px top-[522px] h-[150px] w-[177px] border-[5px] border-[#d84e7d]" />
      </div>
    </div>
  );
}
